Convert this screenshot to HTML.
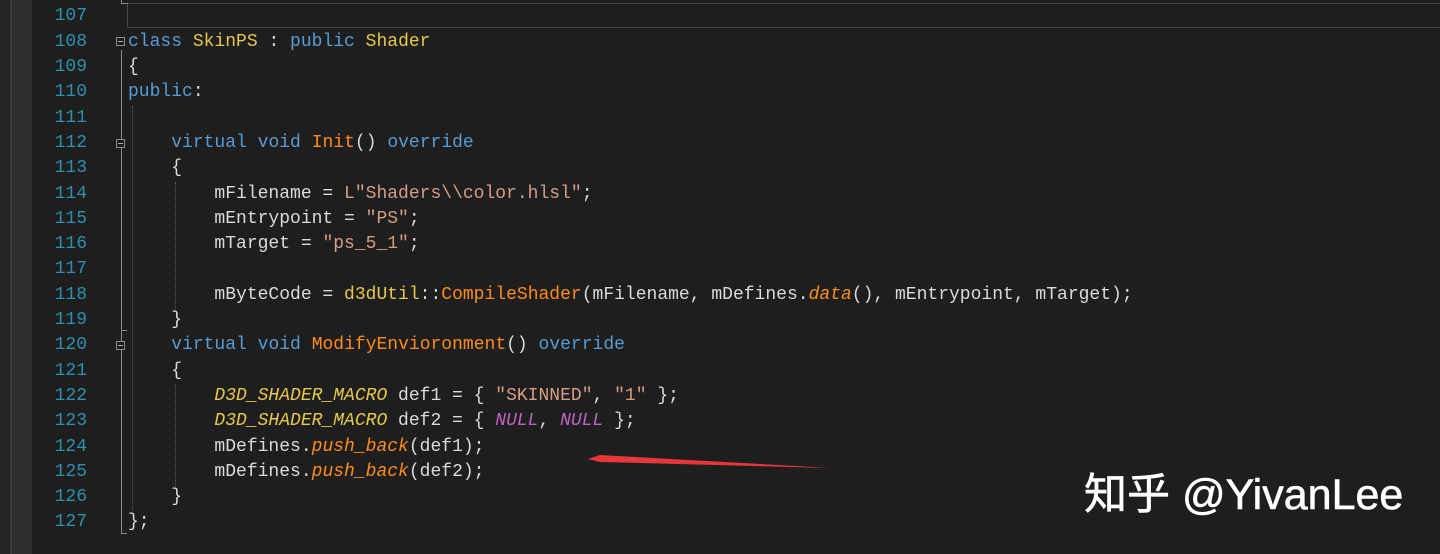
<!DOCTYPE html>
<html><head><meta charset="utf-8"><style>
body{margin:0;width:1440px;height:554px;background:#1e1e1e;overflow:hidden;position:relative;font-family:"Liberation Mono",monospace;font-size:18px}
.l{position:absolute;left:0;height:25.3px;line-height:25.3px;white-space:pre;width:1440px}
.n{position:absolute;left:30px;width:57px;text-align:right;color:#2b91af}
.c{position:absolute;left:128px;color:#dadada}
.k{color:#569cd6}.t{color:#e6c84a}.f{color:#ff8c1a}.s{color:#d69d85}.p{color:#bd63c5;font-style:italic}.i{font-style:italic}
</style></head><body>
<div style="position:absolute;left:0;top:0;width:10px;height:554px;background:#252526"></div>
<div style="position:absolute;left:10px;top:0;width:2px;height:554px;background:#3a3a3c"></div>
<div style="position:absolute;left:12px;top:0;width:20px;height:554px;background:#2d2d30"></div>
<div style="position:absolute;left:127px;top:3px;width:1313px;height:25px;border:1px solid #464646;border-right:none;box-sizing:border-box"></div>
<div style="position:absolute;left:121px;top:0;width:6px;height:3px;border-left:1px solid #888;border-bottom:1px solid #888"></div>
<div style="position:absolute;left:121px;top:50px;width:1px;height:483px;background:#8a8a8a"></div>
<div style="position:absolute;left:121px;top:533px;width:6px;height:1px;background:#8a8a8a"></div>
<div style="position:absolute;left:116px;top:37px;width:9px;height:9px;border:1px solid #8a8a8a;box-sizing:border-box;background:#1e1e1e"></div>
<div style="position:absolute;left:118px;top:41px;width:5px;height:1px;background:#aaa"></div>
<div style="position:absolute;left:116px;top:139px;width:9px;height:9px;border:1px solid #8a8a8a;box-sizing:border-box;background:#1e1e1e"></div>
<div style="position:absolute;left:118px;top:143px;width:5px;height:1px;background:#aaa"></div>
<div style="position:absolute;left:116px;top:341px;width:9px;height:9px;border:1px solid #8a8a8a;box-sizing:border-box;background:#1e1e1e"></div>
<div style="position:absolute;left:118px;top:345px;width:5px;height:1px;background:#aaa"></div>
<div style="position:absolute;left:121px;top:330px;width:6px;height:1px;background:#8a8a8a"></div>
<div style="position:absolute;left:132px;top:106px;width:0;height:404px;border-left:1px dotted #5a5a5a"></div>
<div style="position:absolute;left:175px;top:182px;width:0;height:130px;border-left:1px dotted #5a5a5a"></div>
<div style="position:absolute;left:175px;top:384px;width:0;height:105px;border-left:1px dotted #5a5a5a"></div>

<div class="l" style="top:4.4px"><span class="n">107</span></div>
<div class="l" style="top:29.7px"><span class="n">108</span><span class="c"><span class="k">class</span> <span class="t">SkinPS</span> : <span class="k">public</span> <span class="t">Shader</span></span></div>
<div class="l" style="top:55px"><span class="n">109</span><span class="c">{</span></div>
<div class="l" style="top:80.3px"><span class="n">110</span><span class="c"><span class="k">public</span>:</span></div>
<div class="l" style="top:105.6px"><span class="n">111</span></div>
<div class="l" style="top:130.9px"><span class="n">112</span><span class="c">    <span class="k">virtual</span> <span class="k">void</span> <span class="f">Init</span>() <span class="k">override</span></span></div>
<div class="l" style="top:156.2px"><span class="n">113</span><span class="c">    {</span></div>
<div class="l" style="top:181.5px"><span class="n">114</span><span class="c">        mFilename = <span class="s">L"Shaders\\color.hlsl"</span>;</span></div>
<div class="l" style="top:206.8px"><span class="n">115</span><span class="c">        mEntrypoint = <span class="s">"PS"</span>;</span></div>
<div class="l" style="top:232.1px"><span class="n">116</span><span class="c">        mTarget = <span class="s">"ps_5_1"</span>;</span></div>
<div class="l" style="top:257.4px"><span class="n">117</span></div>
<div class="l" style="top:282.7px"><span class="n">118</span><span class="c">        mByteCode = <span class="t">d3dUtil</span>::<span class="f">CompileShader</span>(mFilename, mDefines.<span class="f i">data</span>(), mEntrypoint, mTarget);</span></div>
<div class="l" style="top:308px"><span class="n">119</span><span class="c">    }</span></div>
<div class="l" style="top:333.3px"><span class="n">120</span><span class="c">    <span class="k">virtual</span> <span class="k">void</span> <span class="f">ModifyEnvioronment</span>() <span class="k">override</span></span></div>
<div class="l" style="top:358.6px"><span class="n">121</span><span class="c">    {</span></div>
<div class="l" style="top:383.9px"><span class="n">122</span><span class="c">        <span class="t i">D3D_SHADER_MACRO</span> def1 = { <span class="s">"SKINNED"</span>, <span class="s">"1"</span> };</span></div>
<div class="l" style="top:409.2px"><span class="n">123</span><span class="c">        <span class="t i">D3D_SHADER_MACRO</span> def2 = { <span class="p">NULL</span>, <span class="p">NULL</span> };</span></div>
<div class="l" style="top:434.5px"><span class="n">124</span><span class="c">        mDefines.<span class="f i">push_back</span>(def1);</span></div>
<div class="l" style="top:459.8px"><span class="n">125</span><span class="c">        mDefines.<span class="f i">push_back</span>(def2);</span></div>
<div class="l" style="top:485.1px"><span class="n">126</span><span class="c">    }</span></div>
<div class="l" style="top:510.4px"><span class="n">127</span><span class="c">};</span></div>

<svg style="position:absolute;left:0;top:0" width="1440" height="554"><polygon points="588,459 600,455 832,468 600,462" fill="#e8373a"/></svg>
<div style="position:absolute;left:1084px;top:467px;font-family:'Liberation Sans','Noto Sans CJK SC',sans-serif;font-size:43px;color:#fff;white-space:pre;line-height:56px;-webkit-text-stroke:0.6px #fff">知乎 @YivanLee</div>
</body></html>
